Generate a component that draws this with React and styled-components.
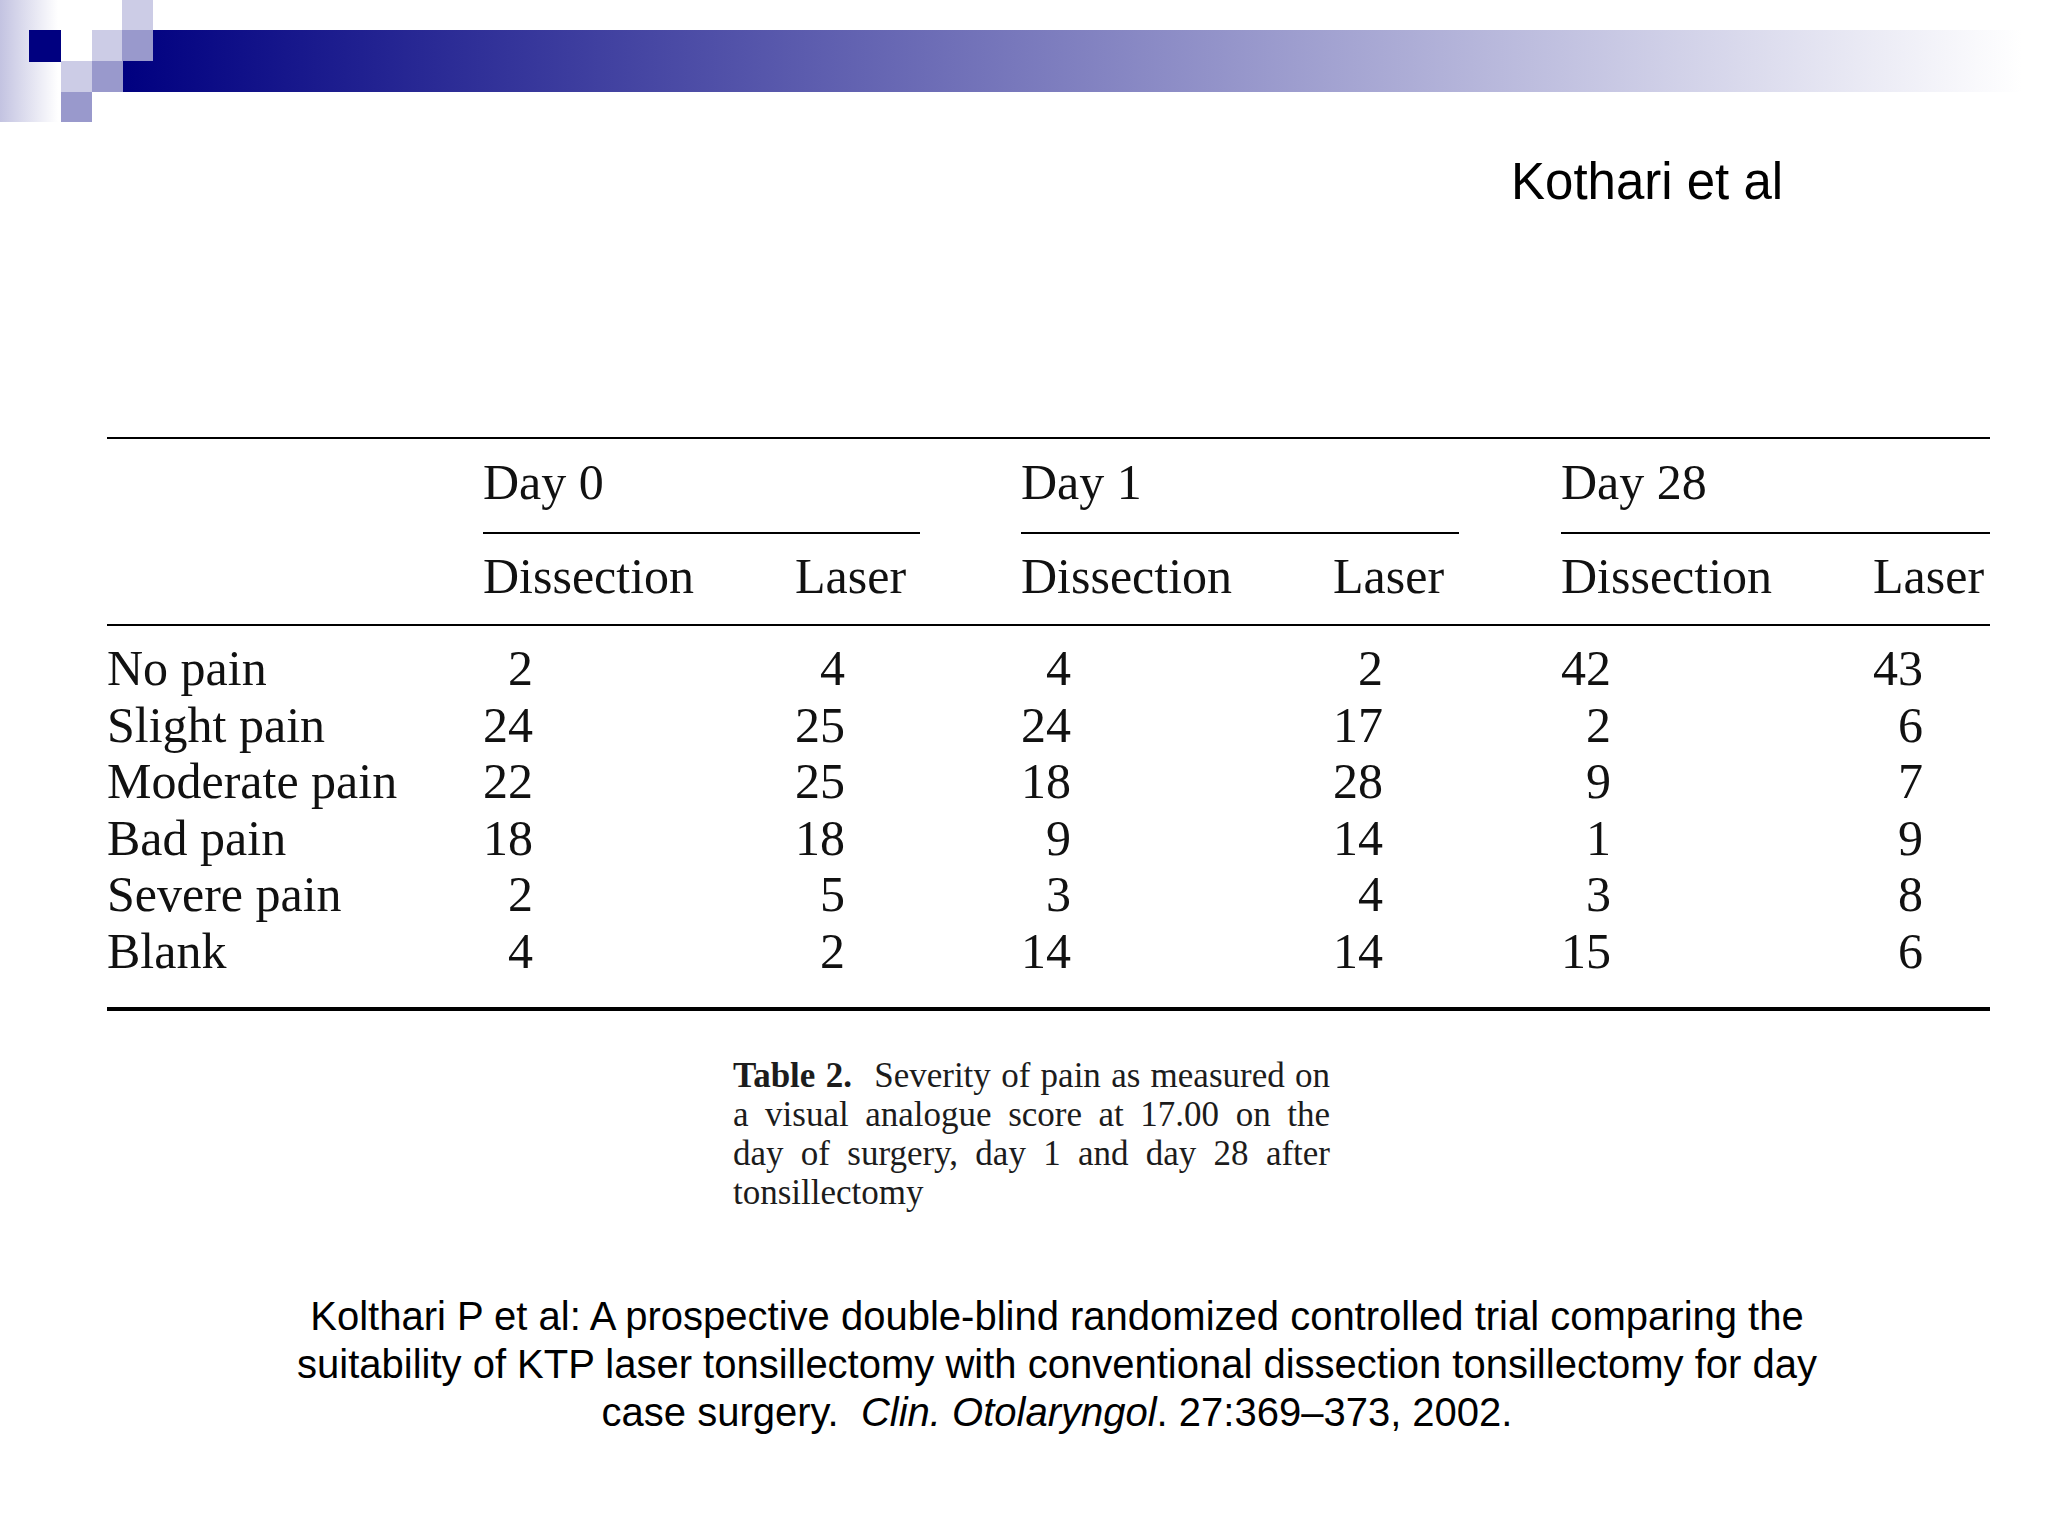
import React from "react";
import styled, { createGlobalStyle, css } from "styled-components";

const Global = createGlobalStyle`
  html, body { margin: 0; padding: 0; background: #ffffff; }
  body { width: 2048px; height: 1536px; overflow: hidden; }
`;

const Page = styled.div`
  width: 2048px;
  height: 1536px;
  display: flex;
  flex-direction: column;
  background: #ffffff;
`;

const Banner = styled.svg`
  display: block;
  width: 2048px;
  height: 123px;
  flex: none;
`;

const Title = styled.h1`
  margin: 28px 0 0 0;
  padding-left: 1511px;
  font-family: "Liberation Sans", Arial, sans-serif;
  font-weight: 400;
  font-size: 51px;
  line-height: 61px;
  color: #000;
`;

const cols = css`
  display: grid;
  grid-template-columns: 376px 312px 125px 101px 312px 126px 102px 312px 117px;
`;

const Table = styled.div`
  width: 1883px;
  margin: 225px 0 0 107px;
  border-top: 2px solid #000;
  border-bottom: 4px solid #000;
  font-family: "Liberation Serif", "Times New Roman", serif;
  font-size: 50px;
  color: #111;
`;

const GroupRow = styled.div`
  ${cols};
  padding-top: 15px;
`;

const DayCell = styled.div`
  grid-column: ${(p) => p.$col} / span 2;
  line-height: 56px;
  padding-bottom: 22px;
  border-bottom: 2px solid #000;
`;

const SubRow = styled.div`
  ${cols};
  padding: 14px 0 20px;
  line-height: 56px;
  border-bottom: 2px solid #000;
`;

const SubCell = styled.div`
  grid-column: ${(p) => p.$col};
`;

const Body = styled.div`
  padding: 14px 0 28px;
`;

const BodyRow = styled.div`
  ${cols};
  line-height: 56.5px;
`;

const Label = styled.div`
  grid-column: 1;
  white-space: nowrap;
`;

const Num = styled.div`
  grid-column: ${(p) => p.$col};
  width: 50px;
  text-align: right;
`;

const Caption = styled.div`
  margin: 45px 0 0 733px;
  width: 597px;
  font-family: "Liberation Serif", "Times New Roman", serif;
  font-size: 35px;
  line-height: 39px;
  color: #1c1c1c;
`;

const CaptionLine = styled.div`
  text-align: ${(p) => (p.$last ? "left" : "justify")};
  text-align-last: ${(p) => (p.$last ? "left" : "justify")};
  white-space: nowrap;
`;

const CaptionLabel = styled.b`
  font-weight: 700;
  margin-right: 12px;
`;

const Footer = styled.div`
  margin-top: 80px;
  padding-left: 66px;
  text-align: center;
  font-family: "Liberation Sans", Arial, sans-serif;
  font-size: 40px;
  line-height: 48px;
  color: #000;
`;

const FooterLine = styled.div`
  white-space: nowrap;
`;

const subCols = [2, 3, 5, 6, 8, 9];

const rows = [
  ["No pain", [2, 4, 4, 2, 42, 43]],
  ["Slight pain", [24, 25, 24, 17, 2, 6]],
  ["Moderate pain", [22, 25, 18, 28, 9, 7]],
  ["Bad pain", [18, 18, 9, 14, 1, 9]],
  ["Severe pain", [2, 5, 3, 4, 3, 8]],
  ["Blank", [4, 2, 14, 14, 15, 6]],
];

function PixelBanner() {
  const s = 31;
  return (
    <Banner viewBox="0 0 2048 123">
      <defs>
        <linearGradient id="strip" x1="0" y1="0" x2="1" y2="0">
          <stop offset="0" stopColor="#c3c3e1" />
          <stop offset="1" stopColor="#ffffff" />
        </linearGradient>
        <linearGradient id="bar" x1="0" y1="0" x2="1" y2="0">
          <stop offset="0" stopColor="#000080" />
          <stop offset="1" stopColor="#ffffff" />
        </linearGradient>
      </defs>
      <rect x="0" y="0" width="58" height="122" fill="url(#strip)" />
      <rect x="122" y="30" width="1900" height="62" fill="url(#bar)" />
      <rect x="29" y="30" width={s + 1} height={s + 1} fill="#000080" />
      <rect x="122" y="0" width={s} height={s - 1} fill="#ccccE6" />
      <rect x="92" y="30" width={s} height={s} fill="#ccccE6" />
      <rect x="122" y="30" width={s} height={s} fill="#9999cc" />
      <rect x="61" y="61" width={s} height={s} fill="#ccccE6" />
      <rect x="92" y="61" width={s} height={s} fill="#9999cc" />
      <rect x="61" y="92" width={s} height={s - 1} fill="#9999cc" />
    </Banner>
  );
}

export default function App() {
  return (
    <>
      <Global />
      <Page>
        <PixelBanner />
        <Title>Kothari et al</Title>
        <Table>
          <GroupRow>
            <DayCell $col={2}>Day 0</DayCell>
            <DayCell $col={5}>Day 1</DayCell>
            <DayCell $col={8}>Day 28</DayCell>
          </GroupRow>
          <SubRow>
            {subCols.map((c, i) => (
              <SubCell key={c} $col={c}>
                {i % 2 === 0 ? "Dissection" : "Laser"}
              </SubCell>
            ))}
          </SubRow>
          <Body>
            {rows.map(([label, vals]) => (
              <BodyRow key={label}>
                <Label>{label}</Label>
                {vals.map((v, i) => (
                  <Num key={i} $col={subCols[i]}>
                    {v}
                  </Num>
                ))}
              </BodyRow>
            ))}
          </Body>
        </Table>
        <Caption>
          <CaptionLine>
            <CaptionLabel>Table 2.</CaptionLabel> Severity of pain as measured on
          </CaptionLine>
          <CaptionLine>a visual analogue score at 17.00 on the</CaptionLine>
          <CaptionLine>day of surgery, day 1 and day 28 after</CaptionLine>
          <CaptionLine $last>tonsillectomy</CaptionLine>
        </Caption>
        <Footer>
          <FooterLine>
            Kolthari P et al: A prospective double-blind randomized controlled trial comparing the
          </FooterLine>
          <FooterLine>
            suitability of KTP laser tonsillectomy with conventional dissection tonsillectomy for day
          </FooterLine>
          <FooterLine>
            case surgery.&nbsp;&nbsp;<i>Clin. Otolaryngol</i>. 27:369–373, 2002.
          </FooterLine>
        </Footer>
      </Page>
    </>
  );
}
